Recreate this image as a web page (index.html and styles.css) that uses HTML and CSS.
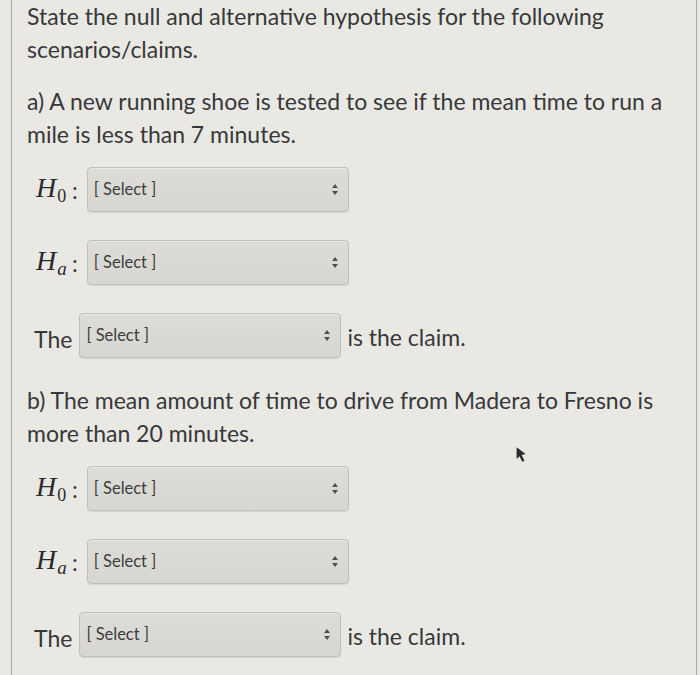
FILE: index.html
```html
<!DOCTYPE html>
<html lang="en">
<head>
<meta charset="utf-8">
<title>Hypothesis question</title>
<link rel="stylesheet" href="styles.css">
</head>
<body>
<div class="page">
  <p class="para">State the null and alternative hypothesis for the following scenarios/claims.</p>

  <section class="part">
    <p class="para">a) A new running shoe is tested to see if the mean time to run a mile is less than 7 minutes.</p>

    <div class="row row-h">
      <span class="math"><i>H</i><sub>0</sub></span><span class="colon">:</span>
      <div class="select"><span>[ Select ]</span><span class="arrows"></span></div>
    </div>
    <div class="row row-h">
      <span class="math"><i>H</i><sub><i>a</i></sub></span><span class="colon">:</span>
      <div class="select"><span>[ Select ]</span><span class="arrows"></span></div>
    </div>
    <div class="row row-claim">
      <span class="word">The</span>
      <div class="select"><span>[ Select ]</span><span class="arrows"></span></div>
      <span class="word">is the claim.</span>
    </div>
  </section>

  <section class="part part-b">
    <p class="para">b) The mean amount of time to drive from Madera to Fresno is more than 20 minutes.</p>

    <div class="row row-h">
      <span class="math"><i>H</i><sub>0</sub></span><span class="colon">:</span>
      <div class="select"><span>[ Select ]</span><span class="arrows"></span></div>
    </div>
    <div class="row row-h">
      <span class="math"><i>H</i><sub><i>a</i></sub></span><span class="colon">:</span>
      <div class="select"><span>[ Select ]</span><span class="arrows"></span></div>
    </div>
    <div class="row row-claim">
      <span class="word">The</span>
      <div class="select"><span>[ Select ]</span><span class="arrows"></span></div>
      <span class="word">is the claim.</span>
    </div>
  </section>

  <svg class="cursor" width="14" height="18" viewBox="0 0 12 16" aria-hidden="true">
    <path d="M3 1 L11 7 L7.5 8 L10 13 L8 14 L5.5 9 L3 11.5 Z" fill="#2a2a30"/>
  </svg>
</div>
</body>
</html>
```

FILE: styles.css
```css
html, body {
  margin: 0;
  padding: 0;
  background: #e9e8e3;
}

body {
  font-family: Lato, "Open Sans", sans-serif;
  color: #37383b;
}

.page {
  position: relative;
  margin-left: 11px;
  width: 686px;
  height: 675px;
  box-sizing: border-box;
  border-left: 1px solid #a9a8a4;
  border-right: 1px solid #a9a8a4;
  padding: 0 24px 0 15px;
}

.para {
  margin: 0;
  font-size: 23px;
  line-height: 33px;
}

.part {
  margin-top: 19px;
}

.part-b {
  margin-top: 26px;
}

.row {
  display: flex;
  align-items: center;
}

.row-h {
  margin-top: 28px;
  padding-left: 9px;
}

.part > .para + .row-h {
  margin-top: 16px;
}

.row-claim {
  margin-top: 28px;
  padding-left: 7px;
}

.math {
  font-family: "Liberation Serif", "DejaVu Serif", serif;
  font-size: 28px;
  width: 36px;
  color: #2b2b2e;
}

.math sub {
  font-size: 18px;
  vertical-align: -5px;
  margin-left: 1px;
}

.math sub i {
  font-size: 19px;
}

.colon {
  font-size: 23px;
  margin-right: 9px;
}

.select {
  display: flex;
  align-items: center;
  justify-content: space-between;
  box-sizing: border-box;
  width: 262px;
  height: 45px;
  padding: 0 10px 0 6px;
  border: 1px solid #c0bfba;
  border-radius: 4px;
  background: linear-gradient(#dedcd7, #d7d6d1);
  box-shadow: inset 0 1px 0 rgba(255, 255, 255, 0.35), 0 1px 1px rgba(0, 0, 0, 0.08);
  font-size: 16.5px;
  color: #3c3d41;
}

.select > span:first-child {
  margin-top: -2px;
}

.arrows {
  position: relative;
  width: 6px;
  height: 11px;
}

.arrows::before,
.arrows::after {
  content: "";
  position: absolute;
  left: 0;
  border-left: 3px solid transparent;
  border-right: 3px solid transparent;
}

.arrows::before {
  top: 0;
  border-bottom: 4px solid #4f5054;
}

.arrows::after {
  bottom: 0;
  border-top: 4px solid #4f5054;
}

.row-claim .word {
  font-size: 23px;
}

.row-claim .word:first-child {
  margin-right: 7px;
  padding-top: 7px;
}

.row-claim .word:last-child {
  margin-left: 6px;
  padding-top: 3px;
}

.cursor {
  position: absolute;
  left: 501px;
  top: 446px;
}
```
